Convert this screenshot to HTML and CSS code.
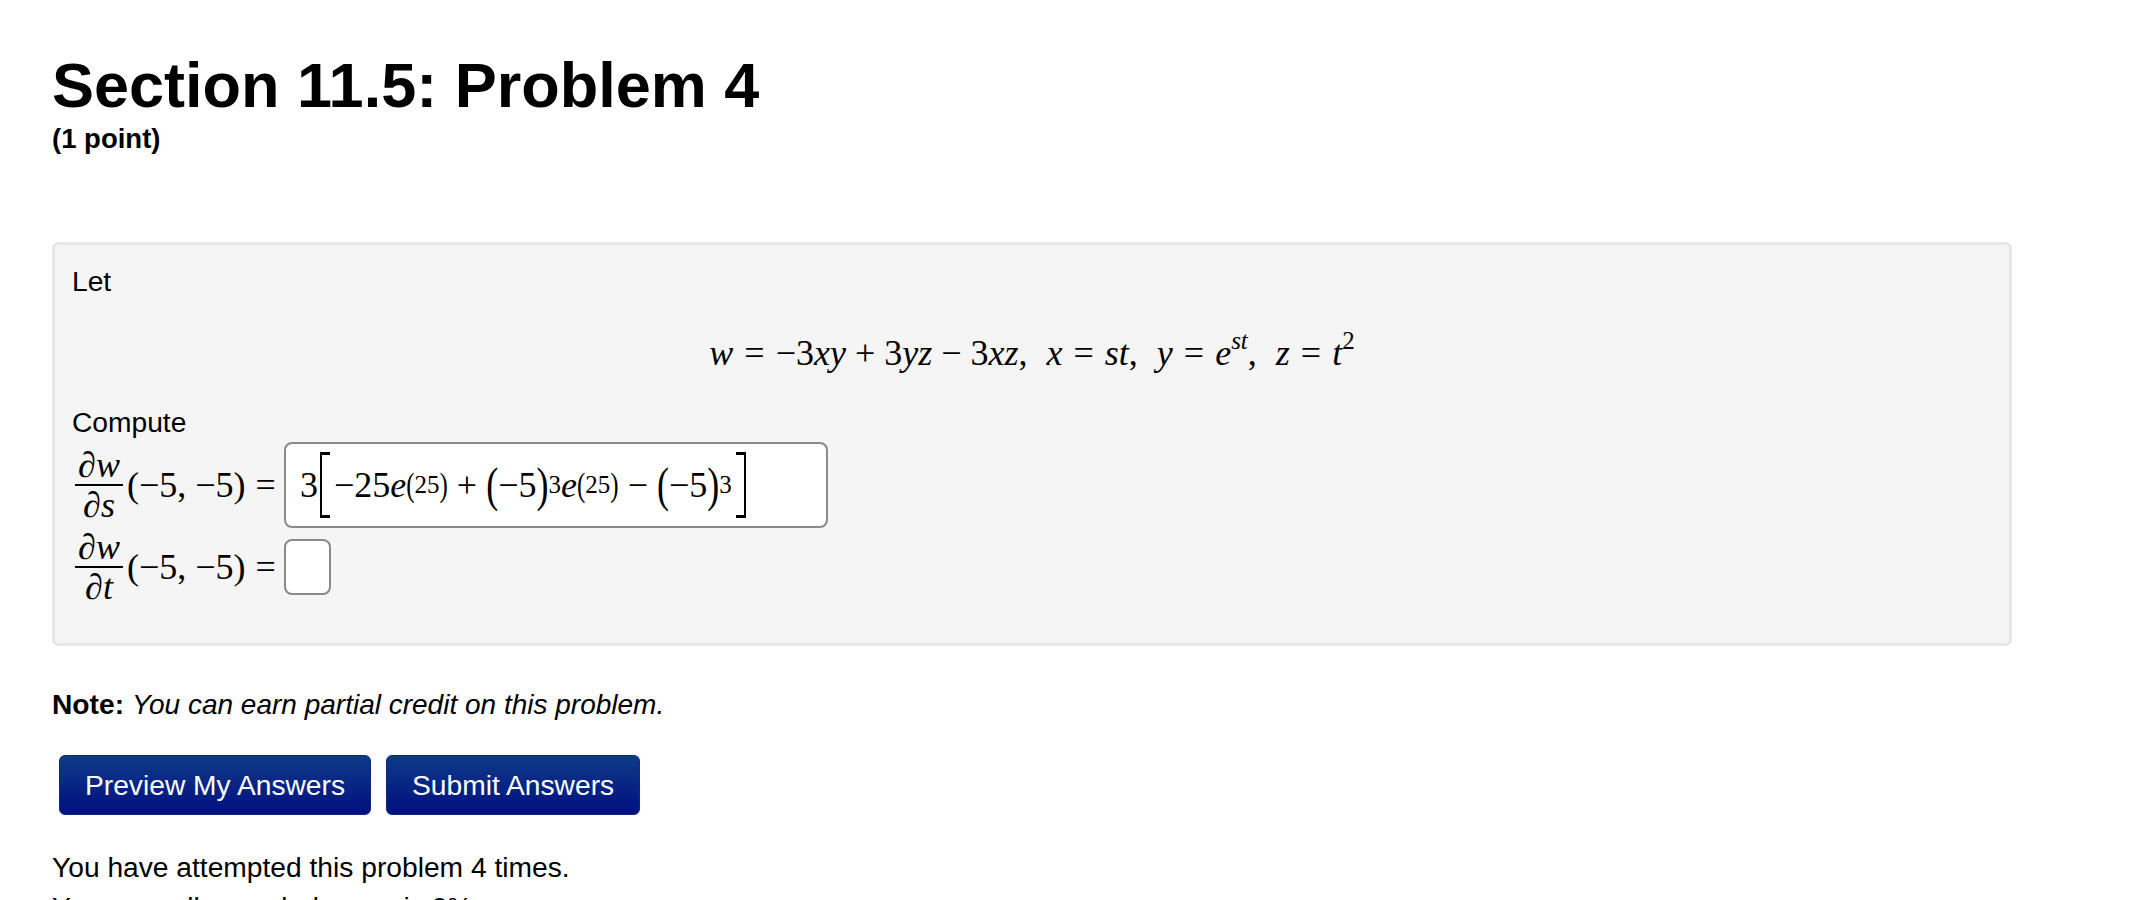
FILE: index.html
```html
<!DOCTYPE html>
<html lang="en">
<head>
<meta charset="utf-8">
<title>Section 11.5: Problem 4</title>
<link rel="stylesheet" href="styles.css">
</head>
<body>
<main class="page">
  <h1 class="title">Section 11.5: Problem 4</h1>
  <p class="points">(1 point)</p>
  <section class="panel">
    <p class="line">Let</p>
    <div class="display math"><i>w</i><span class="rel">=</span><span class="neg">−</span>3<i>xy</i><span class="bin">+</span>3<i>yz</i><span class="bin">−</span>3<i>xz</i>,<span class="quad"></span><i>x</i><span class="rel">=</span><i>st</i>,<span class="quad"></span><i>y</i><span class="rel">=</span><i>e</i><sup class="sup"><i>st</i></sup>,<span class="quad"></span><i>z</i><span class="rel">=</span><i>t</i><sup class="sup">2</sup></div>
    <p class="line compute">Compute</p>
    <div class="eq math">
      <span class="frac"><span class="num"><i>∂w</i></span><span class="den"><i>∂s</i></span></span>
      <span class="args">(−5, −5)</span><span class="rel">=</span>
      <span class="answer filled">3<span class="bracket left"></span><span class="neg">−</span>25<i>e</i><sup class="sup paren"><span class="tall">(</span>25<span class="tall">)</span></sup><span class="bin">+</span><span class="tall">(</span><span class="neg">−</span>5<span class="tall">)</span><sup class="sup">3</sup><i>e</i><sup class="sup paren"><span class="tall">(</span>25<span class="tall">)</span></sup><span class="bin">−</span><span class="tall">(</span><span class="neg">−</span>5<span class="tall">)</span><sup class="sup">3</sup><span class="bracket right"></span></span>
    </div>
    <div class="eq math">
      <span class="frac"><span class="num"><i>∂w</i></span><span class="den"><i>∂t</i></span></span>
      <span class="args">(−5, −5)</span><span class="rel">=</span>
      <span class="answer empty"></span>
    </div>
  </section>
  <p class="note"><b>Note:</b> <em>You can earn partial credit on this problem.</em></p>
  <div class="actions">
    <button class="btn" type="button">Preview My Answers</button>
    <button class="btn" type="button">Submit Answers</button>
  </div>
  <p class="status">You have attempted this problem 4 times.<br>Your overall recorded score is 0%.</p>
</main>
</body>
</html>
```
FILE: styles.css
```css
html, body { margin: 0; height: 100%; overflow: hidden; background: #fff; }
body { font-family: "Liberation Sans", Arial, sans-serif; color: #000; font-size: 28.2px; line-height: 40px; }
.page { padding: 52px 118px 0 52px; }
.title { margin: 0; font-size: 63px; line-height: 66px; font-weight: 700; }
.points { margin: 4px 0 0; font-size: 27.5px; font-weight: 700; line-height: 34px; }
.panel { margin-top: 86px; height: 382px; padding: 16px 17px 0 17px; background: #f5f5f5; border: 3px solid #e6e6e6; border-radius: 6px; }
.line { margin: 0; }
.display { text-align: center; margin-top: 23px; height: 58px; line-height: 58px; }
.compute { margin-top: 20px; }
.math { font-family: "Liberation Serif", "Times New Roman", serif; font-size: 36px; }
.math i { font-style: italic; }
.rel { margin: 0 11px; }
.bin { margin: 0 9px; }
.neg { margin: 0; }
.quad { display: inline-block; width: 19px; }
.sup { font-size: 25px; line-height: 0; vertical-align: 16px; }
.paren { vertical-align: 22px; }
.tall { display: inline-block; transform: scaleY(1.35); }
.eq { display: flex; align-items: center; line-height: 40px; }
.frac { display: inline-flex; flex-direction: column; align-items: stretch; text-align: center; width: 48px; margin-left: 3px; line-height: 38px; }
.num { border-bottom: 2px solid #000; height: 38px; }
.den { height: 38px; }
.args { margin-left: 4px; }
.eq .rel { margin: 0 8px 0 10px; }
.answer { display: inline-flex; align-items: center; box-sizing: border-box; background: #fff; border: 2px solid #8a8a8a; border-radius: 8px; }
.filled { width: 544px; height: 86px; padding: 0 8px 0 14px; }
.empty { width: 47px; height: 56px; }
.bracket { display: inline-block; width: 8px; height: 60px; border: 2px solid #000; border-width: 3px 0; }
.bracket.left { border-left-width: 2px; margin: 0 4px 0 2px; }
.bracket.right { border-right-width: 2px; margin-left: 4px; }
.note { margin: 38px 0 0; }
.note em { font-style: italic; font-size: 28px; }
.actions { display: flex; gap: 15px; margin: 30px 0 0 7px; }
.btn { height: 60px; padding: 0 25px; border: 1px solid #0a2a7a; border-radius: 6px; color: #fff; font: inherit; background: linear-gradient(#0e3a88, #001080); }
.status { margin: 32px 0 0; }
```
